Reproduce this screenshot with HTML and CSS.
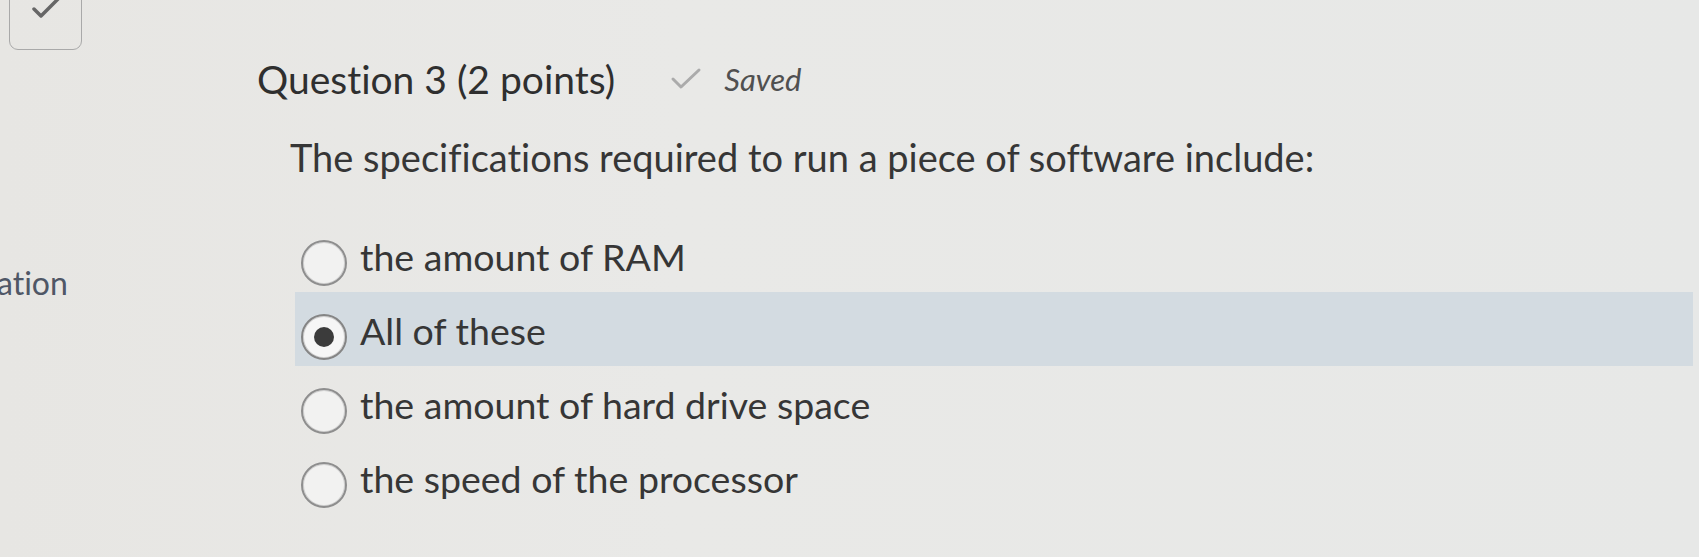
FILE: index.html
```html
<!DOCTYPE html>
<html lang="en">
<head>
<meta charset="utf-8">
<title>Question 3</title>
<link rel="stylesheet" href="styles.css">
</head>
<body>
<div class="page">
  <aside class="sidebar">
    <div class="nav-box">
      <svg class="nav-check" viewBox="0 0 30 24" width="30" height="24"><path d="M3 12 L10 19 L27 2" fill="none" stroke="#666" stroke-width="3.5" stroke-linecap="round" stroke-linejoin="round"/></svg>
    </div>
    <div class="nav-label">ation</div>
  </aside>
  <main class="main">
    <header class="q-header">
      <h1 class="q-title">Question 3 (2 points)</h1>
      <div class="saved">
        <svg class="saved-check" viewBox="0 0 32 24" width="32" height="24"><path d="M3 12 L11 20 L29 3" fill="none" stroke="#ababab" stroke-width="3" stroke-linecap="round" stroke-linejoin="round"/></svg>
        <span class="saved-text">Saved</span>
      </div>
    </header>
    <p class="q-text">The specifications required to run a piece of software include:</p>
    <ul class="options">
      <li class="option"><span class="radio"></span><span class="opt-text">the amount of RAM</span></li>
      <li class="option selected"><span class="radio"><span class="dot"></span></span><span class="opt-text">All of these</span></li>
      <li class="option"><span class="radio"></span><span class="opt-text">the amount of hard drive space</span></li>
      <li class="option"><span class="radio"></span><span class="opt-text">the speed of the processor</span></li>
    </ul>
  </main>
</div>
</body>
</html>
```
FILE: styles.css
```css
html, body {
  margin: 0;
  padding: 0;
}
body {
  background: linear-gradient(90deg, #e7e6e3 0%, #e9e9e7 40%, #e7e8e7 100%);
  font-family: Lato, "Open Sans", sans-serif;
  font-variant-ligatures: none;
  color: #363636;
  width: 1699px;
  height: 557px;
  overflow: hidden;
}
.page {
  display: flex;
  height: 557px;
}
.sidebar {
  width: 257px;
  flex: none;
  display: flex;
  flex-direction: column;
}
.nav-box {
  margin-top: -22px;
  margin-left: 9px;
  width: 73px;
  height: 72px;
  border: 1.5px solid #a9a9a9;
  border-radius: 9px;
  display: flex;
  justify-content: center;
  align-items: flex-end;
  padding-bottom: 28px;
  box-sizing: border-box;
}
.nav-check {
  display: block;
}
.nav-label {
  margin-top: 214px;
  margin-left: -3px;
  font-size: 32px;
  line-height: 38px;
  color: #4f5766;
}
.main {
  flex: 1;
  padding-top: 56px;
  padding-right: 6px;
}
.q-header {
  display: flex;
  align-items: baseline;
}
.q-title {
  margin: 0;
  font-weight: 400;
  font-size: 39px;
  line-height: 47px;
  color: #2f2f2f;
}
.saved {
  display: flex;
  align-items: center;
  margin-left: 55px;
  gap: 22px;
  transform: translateY(-3px);
}
.saved-check {
  display: block;
}
.saved-text {
  font-style: italic;
  font-size: 31px;
  line-height: 36px;
  color: #505050;
}
.q-text {
  margin: 31px 0 0 33px;
  font-size: 38px;
  line-height: 47px;
  color: #363636;
}
.options {
  list-style: none;
  margin: 37px 0 0 38px;
  padding: 0;
}
.option {
  display: flex;
  align-items: flex-start;
  height: 74px;
  box-sizing: border-box;
  padding: 16px 0 11px 6px;
}
.option.selected {
  background: #d3dbe1;
}
.radio {
  flex: none;
  width: 46px;
  height: 46px;
  margin-top: 6px;
  box-sizing: border-box;
  border-radius: 50%;
  border: 2px solid #8e8e8e;
  background: #f2f2f1;
  box-shadow: inset 0 0 0 1px #d0d0d0;
  display: flex;
  justify-content: center;
  align-items: center;
}
.selected .radio {
  border-color: #858585;
  background: #f6f6f6;
}
.dot {
  width: 20px;
  height: 20px;
  border-radius: 50%;
  background: #3b3b3b;
}
.opt-text {
  margin-left: 13px;
  font-size: 37.5px;
  line-height: 46px;
  color: #363636;
}
```
